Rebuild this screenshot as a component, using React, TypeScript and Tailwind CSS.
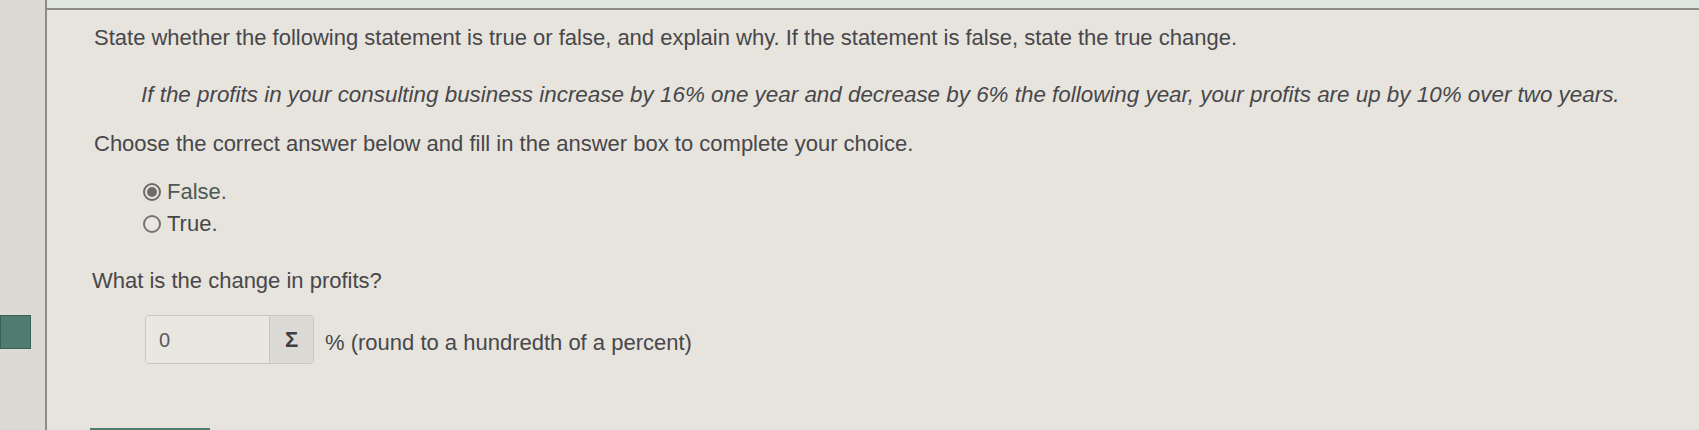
export default function App() {
  const font = { fontFamily: '"Liberation Sans", Arial, sans-serif' };
  return (
    <div className="w-[1699px] h-[430px] overflow-hidden flex bg-[#e6e4dd] text-[#48474b]" style={font}>
      <div className="w-[47px] shrink-0 bg-[#dcdad3] border-r-2 border-[#8e8c89] flex flex-col">
        <div className="mt-[315px] w-[31px] h-[34px] bg-[#4f7c71] border border-[#3c5f56]" />
      </div>
      <div className="flex-1 flex flex-col">
        <div className="h-[10px] bg-[#dfe6e1] border-b-2 border-[#8f8c88]" />
        <div className="pl-[47px] flex flex-col">
          <p className="mt-[15px] text-[22px] leading-[26px]">
            State whether the following statement is true or false, and explain why. If the statement is false, state the true change.
          </p>
          <p className="mt-[31px] ml-[47px] text-[22.4px] leading-[26px] italic">
            If the profits in your consulting business increase by 16% one year and decrease by 6% the following year, your profits are up by 10% over two years.
          </p>
          <p className="mt-[23px] text-[22px] leading-[26px]">
            Choose the correct answer below and fill in the answer box to complete your choice.
          </p>
          <div className="mt-[22px] ml-[49px] flex flex-col gap-[6px]">
            <label className="flex items-center gap-[6px] h-[26px]">
              <span className="w-[18px] h-[18px] rounded-full border-2 border-[#6d6c6a] flex items-center justify-center bg-[#e9e7e1]">
                <span className="w-[10px] h-[10px] rounded-full bg-[#6e6d6b]" />
              </span>
              <span className="text-[22px] leading-[26px] text-[#4d5a55]">False.</span>
            </label>
            <label className="flex items-center gap-[6px] h-[26px]">
              <span className="w-[18px] h-[18px] rounded-full border-2 border-[#757472] bg-[#e9e7e1]" />
              <span className="text-[22px] leading-[26px]">True.</span>
            </label>
          </div>
          <p className="mt-[31px] -ml-[2px] text-[22px] leading-[26px]">What is the change in profits?</p>
          <div className="mt-[21px] ml-[51px] flex items-center gap-[11px]">
            <div className="flex h-[49px] w-[169px] rounded-[4px] border border-[#c8c6c0] overflow-hidden">
              <div className="w-[123px] bg-[#e9e7e1] flex items-center pl-[13px] text-[20px] text-[#5a5958]">0</div>
              <div className="flex-1 bg-[#dcdad4] border-l border-[#c8c6c0] flex items-center justify-center text-[22px] font-bold text-[#3f3e40]">Σ</div>
            </div>
            <span className="mt-[6px] text-[22px] leading-[26px]">% (round to a hundredth of a percent)</span>
          </div>
        </div>
        <div className="flex-1" />
        <div className="ml-[43px] w-[120px] h-[2px] bg-[#4f7c71]" />
      </div>
    </div>
  );
}
